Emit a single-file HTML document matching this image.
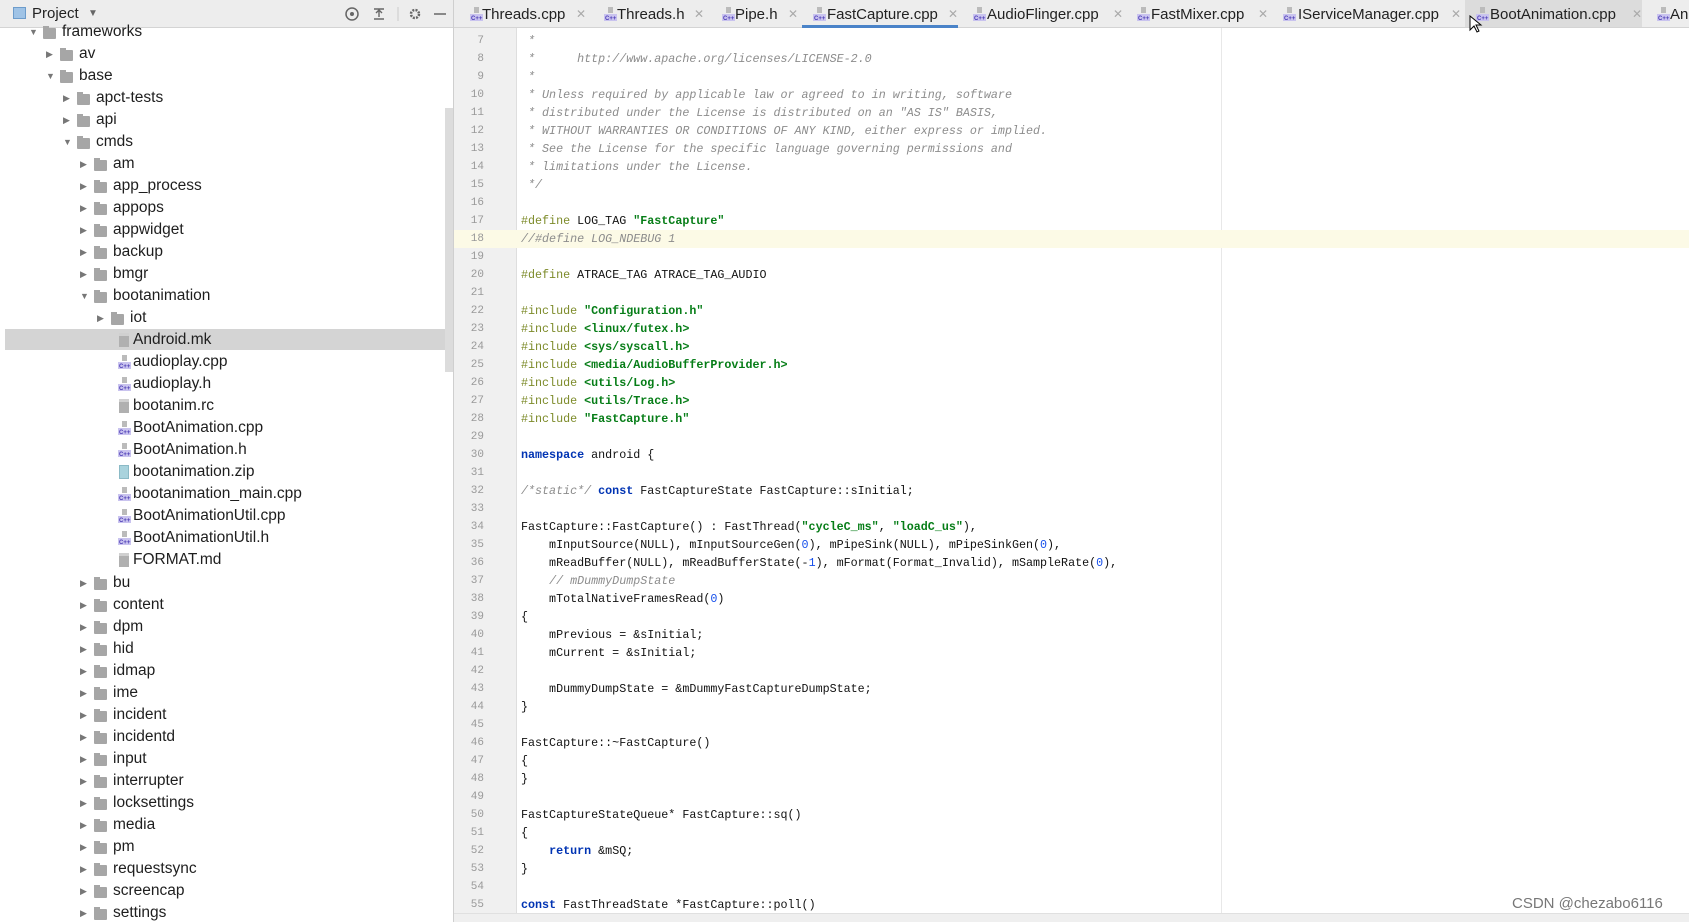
<!DOCTYPE html>
<html><head><meta charset="utf-8"><style>
*{margin:0;padding:0;box-sizing:border-box}
body{width:1689px;height:922px;overflow:hidden;background:#fff;position:relative;font-family:"Liberation Sans","DejaVu Sans",sans-serif}
.abs{position:absolute}
#hdr{left:0;top:0;width:454px;height:28px;background:#ededed;border-bottom:1px solid #d4d4d4}
#tabs{left:454px;top:0;width:1235px;height:28px;background:#ededed;border-bottom:1px solid #d4d4d4}
.tab{position:absolute;top:6px;font-size:15px;color:#222;white-space:nowrap}
.tx{position:absolute;top:7px;font-size:12px;color:#aaa}
.ci{position:absolute;top:7px;width:13px;height:14px}
.row{position:absolute;height:22px;line-height:22px;font-size:15.5px;color:#1e1e1e;white-space:nowrap}
.arr{position:absolute;font-size:9px;color:#777}
.fold{position:absolute;width:13px;height:11px;background:#a6a6a6;border-radius:1px}
.fold:before{content:"";position:absolute;left:0;top:-2px;width:6px;height:3px;background:#a6a6a6}
.code{position:absolute;left:521px;font-family:"Liberation Mono",monospace;font-size:11.7px;line-height:18px;height:18px;white-space:pre;color:#111}
.ln{position:absolute;left:454px;width:30px;text-align:right;font-family:"Liberation Mono",monospace;font-size:11px;line-height:18px;color:#999}
.c{color:#8c8c8c;font-style:italic}
.p{color:#7d8b2a}
.s{color:#067d17;font-weight:bold}
.k{color:#0033b3;font-weight:bold}
.n{color:#1750eb}
</style></head><body>
<div id="hdr" class="abs"></div>
<div id="tabs" class="abs"></div>
<div class="abs" style="left:453px;top:0;width:1px;height:922px;background:#cfcfcf"></div>
<div class="abs" style="left:13px;top:7px;width:13px;height:12px;background:#9fc3e6;border:1px solid #6d9ccb"></div>
<div class="abs" style="left:32px;top:5px;font-size:15px;color:#222">Project</div>
<div class="abs" style="left:88px;top:8px;font-size:10px;color:#666">▼</div>
<svg class="abs" style="left:345px;top:6px" width="105" height="16" viewBox="0 0 105 16">
<circle cx="7" cy="8" r="6" fill="none" stroke="#666" stroke-width="1.5"/><circle cx="7" cy="8" r="2" fill="#666"/>
<path d="M29 3h10M34 5v6M31 7l3-3 3 3M29 13h10" stroke="#666" stroke-width="1.4" fill="none"/>
<line x1="53" y1="1" x2="53" y2="15" stroke="#ccc"/>
<circle cx="70" cy="8" r="4" fill="none" stroke="#666" stroke-width="2.5" stroke-dasharray="2 1.2"/><circle cx="70" cy="8" r="1.5" fill="#ededed"/>
<line x1="89" y1="8" x2="101" y2="8" stroke="#666" stroke-width="1.5"/>
</svg>
<div class="abs" style="left:802px;top:25px;width:156px;height:3px;background:#4a83c8"></div>
<div class="abs" style="left:1465px;top:0;width:177px;height:27px;background:#dcdcdc"></div>
<div id="tablist"></div>
<div class="abs" style="left:5px;top:329px;width:442px;height:21px;background:#d4d4d4"></div>
<div class="abs" style="left:445px;top:108px;width:8px;height:264px;background:#dcdcdc"></div>
<div id="tree"></div>
<div class="abs" style="left:454px;top:28px;width:63px;height:886px;background:#f0f0f0"></div>
<div class="abs" style="left:516px;top:28px;width:1px;height:886px;background:#dedede"></div>
<div class="abs" style="left:1221px;top:28px;width:1px;height:886px;background:#e8e8e8"></div>
<div class="abs" style="left:454px;top:230px;width:1235px;height:18px;background:#fcfae6"></div>
<div id="code"></div>
<div class="abs" style="left:454px;top:913px;width:1235px;height:9px;background:#efefef;border-top:1px solid #e0e0e0"></div>
<div class="abs" style="left:1512px;top:895px;font-size:15px;color:#777">CSDN @chezabo6116</div>
<svg class="abs" style="left:1469px;top:15px" width="14" height="20" viewBox="0 0 14 20"><path d="M1 1v14l4-4 3 6 2-1-3-6h5z" fill="#fff" stroke="#000" stroke-width="1"/></svg>
<script>
var tabs=[[470,482,576,"Threads.cpp"],[604,617,694,"Threads.h"],[722,735,788,"Pipe.h"],[813,827,948,"FastCapture.cpp"],[973,987,1113,"AudioFlinger.cpp"],[1137,1151,1258,"FastMixer.cpp"],[1283,1298,1451,"IServiceManager.cpp"],[1476,1490,1632,"BootAnimation.cpp"],[1657,1670,0,"An"]];
var h="";
tabs.forEach(function(t){
 h+='<svg class="ci" style="left:'+t[0]+'px" viewBox="0 0 13 14"><rect x="4" y="0" width="5" height="6" fill="#bbb"/><rect x="0" y="7" width="13" height="7" fill="#c9c3ef"/><text x="1" y="13" font-size="6" font-family="Liberation Sans" fill="#4b3bb5" font-weight="bold">C++</text></svg>';
 h+='<div class="tab" style="left:'+t[1]+'px">'+t[3]+'</div>';
 if(t[2])h+='<div class="tx" style="left:'+t[2]+'px">✕</div>';
});
document.getElementById("tablist").innerHTML=h;
var tr=[[0,"frameworks","o"],[1,"av","c"],[1,"base","o"],[2,"apct-tests","c"],[2,"api","c"],[2,"cmds","o"],[3,"am","c"],[3,"app_process","c"],[3,"appops","c"],[3,"appwidget","c"],[3,"backup","c"],[3,"bmgr","c"],[3,"bootanimation","o"],[4,"iot","c"],[4,"Android.mk","m"],[4,"audioplay.cpp","f"],[4,"audioplay.h","f"],[4,"bootanim.rc","m"],[4,"BootAnimation.cpp","f"],[4,"BootAnimation.h","f"],[4,"bootanimation.zip","z"],[4,"bootanimation_main.cpp","f"],[4,"BootAnimationUtil.cpp","f"],[4,"BootAnimationUtil.h","f"],[4,"FORMAT.md","m"],[3,"bu","c"],[3,"content","c"],[3,"dpm","c"],[3,"hid","c"],[3,"idmap","c"],[3,"ime","c"],[3,"incident","c"],[3,"incidentd","c"],[3,"input","c"],[3,"interrupter","c"],[3,"locksettings","c"],[3,"media","c"],[3,"pm","c"],[3,"requestsync","c"],[3,"screencap","c"],[3,"settings","c"]];
h="";
tr.forEach(function(r,i){
 var top=21+i*22.02, d=r[0], ax=29+17*d, fx=ax+14, tx=ax+33;
 if(r[2]=="o"||r[2]=="c"){
  h+='<div class="arr" style="left:'+ax+'px;top:'+(top+6)+'px">'+(r[2]=="o"?"▼":"▶")+'</div>';
  h+='<div class="fold" style="left:'+fx+'px;top:'+(top+7)+'px"></div>';
 } else {
  fx=ax+21; tx=ax+36;
  if(r[2]=="f") h+='<svg class="abs" style="left:'+fx+'px;top:'+(top+4)+'px" width="13" height="14" viewBox="0 0 13 14"><rect x="4" y="0" width="5" height="6" fill="#bbb"/><rect x="0" y="7" width="13" height="7" fill="#c9c3ef"/><text x="1" y="13" font-size="6" font-family="Liberation Sans" fill="#4b3bb5" font-weight="bold">C++</text></svg>';
  else if(r[2]=="z") h+='<div class="abs" style="left:'+(fx+1)+'px;top:'+(top+4)+'px;width:10px;height:14px;background:#a9d3dd;border:1px solid #8bbac6"></div>';
  else h+='<div class="abs" style="left:'+(fx+1)+'px;top:'+(top+4)+'px;width:10px;height:14px;background:#b0b0b0;border-top:3px solid #d0d0d0"></div>';
 }
 h+='<div class="row" style="left:'+tx+'px;top:'+top+'px">'+r[1]+'</div>';
});
document.getElementById("tree").innerHTML=h;
var C={
7:'<span class="c"> *</span>',
8:'<span class="c"> *      http://www.apache.org/licenses/LICENSE-2.0</span>',
9:'<span class="c"> *</span>',
10:'<span class="c"> * Unless required by applicable law or agreed to in writing, software</span>',
11:'<span class="c"> * distributed under the License is distributed on an "AS IS" BASIS,</span>',
12:'<span class="c"> * WITHOUT WARRANTIES OR CONDITIONS OF ANY KIND, either express or implied.</span>',
13:'<span class="c"> * See the License for the specific language governing permissions and</span>',
14:'<span class="c"> * limitations under the License.</span>',
15:'<span class="c"> */</span>',
17:'<span class="p">#define</span> LOG_TAG <span class="s">"FastCapture"</span>',
18:'<span class="c">//#define LOG_NDEBUG 1</span>',
20:'<span class="p">#define</span> ATRACE_TAG ATRACE_TAG_AUDIO',
22:'<span class="p">#include</span> <span class="s">"Configuration.h"</span>',
23:'<span class="p">#include</span> <span class="s">&lt;linux/futex.h&gt;</span>',
24:'<span class="p">#include</span> <span class="s">&lt;sys/syscall.h&gt;</span>',
25:'<span class="p">#include</span> <span class="s">&lt;media/AudioBufferProvider.h&gt;</span>',
26:'<span class="p">#include</span> <span class="s">&lt;utils/Log.h&gt;</span>',
27:'<span class="p">#include</span> <span class="s">&lt;utils/Trace.h&gt;</span>',
28:'<span class="p">#include</span> <span class="s">"FastCapture.h"</span>',
30:'<span class="k">namespace</span> android {',
32:'<span class="c">/*static*/</span> <span class="k">const</span> FastCaptureState FastCapture::sInitial;',
34:'FastCapture::FastCapture() : FastThread(<span class="s">"cycleC_ms"</span>, <span class="s">"loadC_us"</span>),',
35:'    mInputSource(NULL), mInputSourceGen(<span class="n">0</span>), mPipeSink(NULL), mPipeSinkGen(<span class="n">0</span>),',
36:'    mReadBuffer(NULL), mReadBufferState(-<span class="n">1</span>), mFormat(Format_Invalid), mSampleRate(<span class="n">0</span>),',
37:'    <span class="c">// mDummyDumpState</span>',
38:'    mTotalNativeFramesRead(<span class="n">0</span>)',
39:'{',
40:'    mPrevious = &amp;sInitial;',
41:'    mCurrent = &amp;sInitial;',
43:'    mDummyDumpState = &amp;mDummyFastCaptureDumpState;',
44:'}',
46:'FastCapture::~FastCapture()',
47:'{',48:'}',
50:'FastCaptureStateQueue* FastCapture::sq()',
51:'{',
52:'    <span class="k">return</span> &amp;mSQ;',
53:'}',
55:'<span class="k">const</span> FastThreadState *FastCapture::poll()'};
h="";
for(var n=7;n<=55;n++){var t=32+(n-7)*18;
 h+='<div class="ln" style="top:'+t+'px">'+n+'</div>';
 if(C[n])h+='<div class="code" style="top:'+t+'px">'+C[n]+'</div>';}
document.getElementById("code").innerHTML=h;
</script>
</body></html>
